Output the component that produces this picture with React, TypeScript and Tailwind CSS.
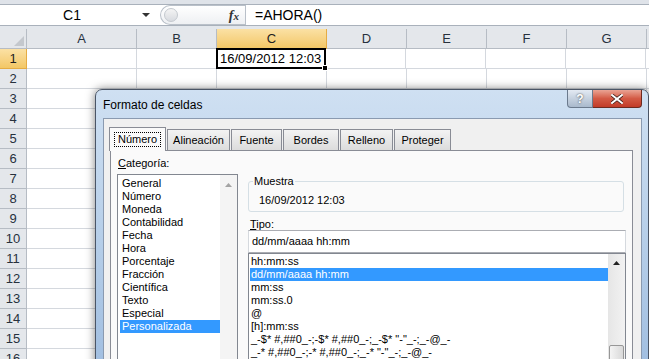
import React from 'react';

const columns = [
  { label: 'A', w: 'w-[110px]' },
  { label: 'B', w: 'w-[80px]' },
  { label: 'C', w: 'w-[110px]' },
  { label: 'D', w: 'w-[80px]' },
  { label: 'E', w: 'w-[80px]' },
  { label: 'F', w: 'w-[80px]' },
  { label: 'G', w: 'w-[80px]' },
  { label: '', w: 'w-[80px]' },
];

const rows = Array.from({ length: 16 }, (_, i) => i + 1);

const categories = [
  'General',
  'Número',
  'Moneda',
  'Contabilidad',
  'Fecha',
  'Hora',
  'Porcentaje',
  'Fracción',
  'Científica',
  'Texto',
  'Especial',
  'Personalizada',
];

const formats = [
  'hh:mm:ss',
  'dd/mm/aaaa hh:mm',
  'mm:ss',
  'mm:ss.0',
  '@',
  '[h]:mm:ss',
  '_-$* #,##0_-;-$* #,##0_-;_-$* "-"_-;_-@_-',
  '_-* #,##0_-;-* #,##0_-;_-* "-"_-;_-@_-',
];

const tabs = [
  { label: 'Número', w: 'w-[57px]', active: true },
  { label: 'Alineación', w: 'w-[63px]' },
  { label: 'Fuente', w: 'w-[51px]' },
  { label: 'Bordes', w: 'w-[56px]' },
  { label: 'Relleno', w: 'w-[53px]' },
  { label: 'Proteger', w: 'w-[57px]' },
];

function UpArrow({ color = '#404040' }: { color?: string }) {
  return (
    <svg width="7" height="4" viewBox="0 0 7 4">
      <path d="M0 4 L3.5 0 L7 4 Z" fill={color} />
    </svg>
  );
}

function FormulaBar() {
  return (
    <div>
      <div className="h-[5px] bg-[#dfe3e9] border-b border-[#a9b1bb]" />
      <div className="flex h-[21px] bg-white border-b border-[#a9b1bb]">
        <div className="w-[160px] flex items-center relative">
          <span className="w-[144px] text-center text-[14px] text-black">C1</span>
          <svg width="8" height="4" viewBox="0 0 8 4" className="ml-[-2px]">
            <path d="M0 0 L8 0 L4 4 Z" fill="#333" />
          </svg>
        </div>
        <div className="w-[85px] flex items-center border border-r-0 border-[#b9c0c9] rounded-l-[10px] bg-gradient-to-b from-white to-[#eef0f3]">
          <div className="ml-[3px] w-[14px] h-[14px] rounded-full border border-[#c4c9cf] bg-gradient-to-b from-[#f4f4f4] to-[#d8dbe0]" />
          <span className="ml-auto mr-[6px] text-[14px] italic font-bold text-[#333] font-['Liberation_Serif',serif]">
            f<span className="text-[11px]">x</span>
          </span>
        </div>
        <div className="flex-1 flex items-center border-l border-[#b9c0c9] pl-[9px] text-[14px] text-black">
          =AHORA()
        </div>
      </div>
      <div className="h-[3px] bg-[#e3e7ec]" />
    </div>
  );
}

function Sheet() {
  return (
    <div className="flex flex-col">
      <div className="flex h-[20px]">
        <div className="w-[27px] shrink-0 bg-[#e4e7eb] border-r border-b border-[#b6bcc4] relative">
          <svg width="10" height="10" viewBox="0 0 10 10" className="absolute right-[2px] bottom-[2px]">
            <path d="M10 0 L10 10 L0 10 Z" fill="#c4c8cd" />
          </svg>
        </div>
        {columns.map((c, i) => (
          <div
            key={i}
            className={`${c.w} shrink-0 flex items-center justify-center text-[13px] border-r border-b ${
              c.label === 'C'
                ? 'bg-gradient-to-b from-[#fbe1a4] to-[#f3c765] border-[#e5ac44] text-[#1e1e1e]'
                : 'bg-[#e4e7eb] border-[#b6bcc4] text-[#27313d]'
            }`}
          >
            {c.label}
          </div>
        ))}
      </div>
      {rows.map((r) => (
        <div key={r} className="flex h-[20px]">
          <div
            className={`w-[27px] shrink-0 flex items-center justify-center text-[13px] border-r border-b ${
              r === 1
                ? 'bg-gradient-to-b from-[#fbe1a4] to-[#f3c765] border-[#e5ac44] text-[#1e1e1e]'
                : 'bg-[#e4e7eb] border-[#b6bcc4] text-[#27313d]'
            }`}
          >
            {r}
          </div>
          {columns.map((c, i) =>
            r === 1 && c.label === 'C' ? (
              <div
                key={i}
                className={`${c.w} shrink-0 relative border-2 border-black flex items-center pl-[2px] text-[13px] text-black whitespace-nowrap -ml-[1px] -mt-[1px] h-[21px]`}
              >
                16/09/2012 12:03
                <div className="absolute -right-[4px] -bottom-[4px] w-[6px] h-[6px] bg-black border border-white" />
              </div>
            ) : (
              <div key={i} className={`${c.w} shrink-0 bg-white border-r border-b border-[#d4d8de]`} />
            )
          )}
        </div>
      ))}
    </div>
  );
}

function Dialog() {
  return (
    <div className="absolute left-[95px] top-[89px] w-[554px] h-[290px] rounded-t-[7px] border border-[#4a5566] bg-gradient-to-b from-[#cfe0f2] via-[#b7cfe9] to-[#9fbde0] shadow-[0_0_10px_rgba(0,0,0,0.5)] flex flex-col text-[11px] text-black">
      <div className="h-[28px] flex justify-between items-start shrink-0">
        <span className="pl-[7px] pt-[6px] text-[12px] text-black">Formato de celdas</span>
        <div className="flex mr-[6px]">
          <div className="w-[26px] h-[18px] rounded-bl-[4px] border border-t-0 border-[#6b7a8d] bg-gradient-to-b from-[#e3eaf3] to-[#a9b9cc] flex items-center justify-center text-[12px] font-bold text-white [text-shadow:0_0_2px_#333]">
            ?
          </div>
          <div className="w-[49px] h-[18px] rounded-br-[4px] border border-t-0 border-l-0 border-[#6d2a20] bg-gradient-to-b from-[#e9a394] via-[#d35a45] to-[#c23b28] flex items-center justify-center">
            <svg width="12" height="10" viewBox="0 0 12 10">
              <path d="M1 1 L11 9 M11 1 L1 9" stroke="#3a1a14" strokeWidth="3.4" strokeLinecap="square" />
              <path d="M1 1 L11 9 M11 1 L1 9" stroke="#ffffff" strokeWidth="2" strokeLinecap="square" />
            </svg>
          </div>
        </div>
      </div>
      <div className="ml-[7px] mr-[6px] flex-1 border border-[#8a9ab0] bg-[#f0f0f0] pt-[7px] pl-[6px] pr-[8px] flex flex-col">
        <div className="flex items-end h-[24px] shrink-0">
          {tabs.map((t) =>
            t.active ? (
              <div
                key={t.label}
                className={`${t.w} h-[24px] -ml-[1px] mr-[1px] border border-b-0 border-[#898c95] bg-[#fafafa] flex items-center justify-center relative z-10 -mb-[1px]`}
              >
                <span className="border border-dotted border-black px-[3px] leading-[13px]">Número</span>
              </div>
            ) : (
              <div
                key={t.label}
                className={`${t.w} h-[21px] mr-[1px] border border-b-0 border-[#898c95] bg-gradient-to-b from-[#f3f3f3] to-[#dcdcdc] flex items-center justify-center`}
              >
                {t.label}
              </div>
            )
          )}
        </div>
        <div className="flex-1 border border-[#898c95] bg-[#fafafa] flex pl-[6px] pt-[6px]">
          <div className="w-[121px] flex flex-col">
            <div className="leading-[13px] mb-[4px] pl-[1px]">
              <span className="underline">C</span>ategoría:
            </div>
            <div className="flex-1 border border-[#828790] bg-white flex">
              <div className="flex-1 pl-[2px] pt-[2px]">
                {categories.map((c) => (
                  <div
                    key={c}
                    className={`leading-[13px] pl-[2px] ${c === 'Personalizada' ? 'bg-[#3399ff] text-white' : ''}`}
                  >
                    {c}
                  </div>
                ))}
              </div>
              <div className="w-[17px] bg-[#f4f4f4] flex justify-center pt-[8px]">
                <UpArrow color="#a3a3a3" />
              </div>
            </div>
          </div>
          <div className="ml-[10px] w-[378px] flex flex-col pt-[18px]">
            <fieldset className="w-[376px] border border-[#d5dfe5] rounded-[3px] pl-[10px] pt-[6px] pb-[4px]">
              <legend className="-ml-[6px] px-[1px] leading-[13px]">Muestra</legend>
              <div className="leading-[13px]">16/09/2012 12:03</div>
            </fieldset>
            <div className="mt-[6px] leading-[12px] pl-[2px]">
              <span className="underline">T</span>ipo:
            </div>
            <div className="h-[23px] border border-[#abadb3] border-x-[#d5d9de] bg-white flex items-center pl-[3px]">
              dd/mm/aaaa hh:mm
            </div>
            <div className="flex-1 border border-[#828790] bg-white flex">
              <div className="flex-1 pl-[1px] pt-[1px] whitespace-pre">
                {formats.map((f) => (
                  <div
                    key={f}
                    className={`leading-[13px] pl-[1px] ${f === 'dd/mm/aaaa hh:mm' ? 'bg-[#3399ff] text-white' : ''}`}
                  >
                    {f}
                  </div>
                ))}
              </div>
              <div className="w-[17px] bg-gradient-to-r from-[#e6e6e6] to-[#f2f2f2] flex flex-col items-center pt-[7px]">
                <UpArrow color="#222" />
                <div className="mt-[80px] w-[15px] h-[30px] rounded-[2px] border border-[#979797] bg-gradient-to-r from-[#f4f4f4] to-[#d9d9d9]" />
              </div>
            </div>
          </div>
        </div>
      </div>
    </div>
  );
}

export default function App() {
  return (
    <div className="relative w-[649px] h-[359px] overflow-hidden bg-white font-['Liberation_Sans',Arial,sans-serif]">
      <FormulaBar />
      <Sheet />
      <Dialog />
    </div>
  );
}
